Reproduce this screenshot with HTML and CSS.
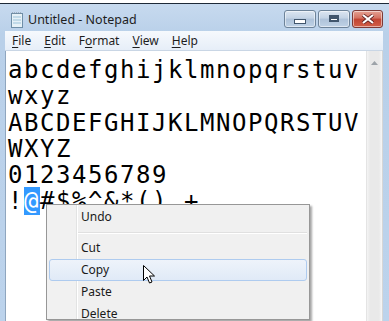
FILE: index.html
```html
<!DOCTYPE html>
<html lang="en">

<head>
    <meta charset="UTF-8">
    <title>Untitled - Notepad</title>
    <link rel="stylesheet" href="styles.css">
</head>

<body>
    <div class="window">
        <div class="titlebar">
            <svg class="app-icon" width="12" height="16" viewBox="0 0 12 16">
                <rect x="0.5" y="1.5" width="11" height="14" fill="#e6f1f7" stroke="#6f8fa8" />
                <line x1="2" y1="5" x2="10" y2="5" stroke="#9cc3da" />
                <line x1="2" y1="8" x2="10" y2="8" stroke="#9cc3da" />
                <line x1="2" y1="11" x2="10" y2="11" stroke="#9cc3da" />
                <line x1="1" y1="1" x2="11" y2="1" stroke="#7a8a98" stroke-dasharray="1 1" />
            </svg>
            <span class="title">Untitled - Notepad</span>
            <div class="buttons">
                <div class="btn">
                    <span class="glyph-min"></span>
                </div>
                <div class="btn">
                    <span class="glyph-max"></span>
                </div>
                <div class="btn close">
                    <svg width="14" height="10" viewBox="0 0 14 10">
                        <path d="M2 1 L12 9 M12 1 L2 9" stroke="#5a1f1f" stroke-width="3.6" />
                        <path d="M2 1 L12 9 M12 1 L2 9" stroke="#ffffff" stroke-width="2.2" />
                    </svg>
                </div>
            </div>
        </div>

        <div class="client">
            <div class="menubar">
                <span class="menu"><u>F</u>ile</span>
                <span class="menu"><u>E</u>dit</span>
                <span class="menu">F<u>o</u>rmat</span>
                <span class="menu"><u>V</u>iew</span>
                <span class="menu"><u>H</u>elp</span>
            </div>
            <div class="editor">
                <div class="text">abcdefghijklmnopqrstuv
wxyz
ABCDEFGHIJKLMNOPQRSTUV
WXYZ
0123456789
!<span class="sel">@</span>#$%^&amp;*()_+</div>
                <div class="scrollbar">
                    <svg class="up" width="7" height="4" viewBox="0 0 7 4">
                        <path d="M0 4 L3.5 0 L7 4 Z" fill="#9da3a9" />
                    </svg>
                </div>
            </div>
        </div>
    </div>

    <div class="context">
        <div class="item">Undo</div>
        <div class="sep"></div>
        <div class="item">Cut</div>
        <div class="item hot">Copy</div>
        <div class="item">Paste</div>
        <div class="item">Delete</div>
    </div>

    <svg class="pointer" width="13" height="20" viewBox="0 0 13 20">
        <path d="M0.5 0.5 L0.5 15.5 L4 12 L6.5 18 L9 17 L6.5 11 L11.5 11 Z" fill="#ffffff" stroke="#000000" stroke-width="1" stroke-linejoin="miter" />
    </svg>
</body>

</html>
```

FILE: styles.css
```css
html {
    overflow: hidden;
}

body {
    margin: 0;
    width: 389px;
    height: 321px;
    overflow: hidden;
    background: #ffffff;
    padding-top: 3px;
    box-sizing: border-box;
    position: relative;
}

.window {
    height: 318px;
    border-top: 1px solid #1d2a38;
    background: linear-gradient(to bottom, #c7daef, #b9d0e9 30px, #bcd3ec);
    padding: 0 6px 0 5px;
    box-sizing: border-box;
    display: flex;
    flex-direction: column;
}

.titlebar {
    height: 27px;
    display: flex;
    align-items: center;
    flex-shrink: 0;
}

.app-icon {
    margin-left: 6px;
    margin-top: 4px;
}

.title {
    font-family: "Noto Sans", "Open Sans", sans-serif;
    font-size: 12.5px;
    color: #1e1e1e;
    margin-left: 5px;
    margin-top: 4px;
}

.buttons {
    margin-left: auto;
    display: flex;
    gap: 2px;
    margin-top: 2px;
}

.btn {
    width: 30px;
    height: 16px;
    border: 1px solid #6d8399;
    border-radius: 3px;
    background: linear-gradient(to bottom, #dce6f1, #c3d3e5 45%, #aec2d9 50%, #bfd2e6);
    box-shadow: inset 0 0 0 1px rgba(255, 255, 255, 0.5);
    display: flex;
    align-items: center;
    justify-content: center;
}

.btn.close {
    width: 29px;
    border-color: #7d3a36;
    background: linear-gradient(to bottom, #e5a293, #d4705f 45%, #c14432 50%, #d15f48);
}

.glyph-min {
    width: 10px;
    height: 3px;
    margin-top: 5px;
    background: #ffffff;
    border: 1px solid #41566d;
}

.glyph-max {
    width: 8px;
    height: 5px;
    background: #ffffff;
    border: 1px solid #41566d;
    box-shadow: inset 0 0 0 1px #41566d, inset 0 2px 0 1px #41566d;
}

.client {
    flex: 1;
    display: flex;
    flex-direction: column;
    min-height: 0;
}

.menubar {
    height: 19px;
    background: linear-gradient(to bottom, #f6f9fd, #e6eef8);
    border-bottom: 1px solid #c9d6e5;
    display: flex;
    align-items: center;
    font-family: "Noto Sans", "Open Sans", sans-serif;
    font-size: 12px;
    color: #1e1e1e;
    padding-left: 7px;
    gap: 13px;
    flex-shrink: 0;
}

.menu u {
    text-decoration-thickness: 1px;
    text-underline-offset: 2px;
}

.editor {
    flex: 1;
    display: flex;
    background: #ffffff;
    border-left: 1px solid #8fa6bf;
    min-height: 0;
}

.text {
    flex: 1;
    white-space: pre;
    font-family: "DejaVu Sans Mono", "Liberation Mono", monospace;
    font-size: 24px;
    letter-spacing: 1.55px;
    line-height: 26.3px;
    color: #000000;
    padding: 6px 0 0 2px;
    overflow: hidden;
}

.sel {
    background: #3399ff;
    color: #ffffff;
}

.scrollbar {
    width: 15px;
    background: linear-gradient(to right, #f4f4f4, #e9e9e9 20%, #e9e9e9 80%, #f6f6f6);
    border-left: 1px solid #e4e4e4;
    border-right: 1px solid #d6d6d6;
    display: flex;
    justify-content: center;
    padding-top: 10px;
    box-sizing: content-box;
}

.up {
    display: block;
}

/* context menu floats over the text */
.context {
    position: absolute;
    left: 46px;
    top: 204px;
    width: 258px;
    height: 112px;
    border: 1px solid #979797;
    background: linear-gradient(to right, #f1f1f1 29px, #e2e3e3 29px, #e2e3e3 30px, #ffffff 30px, #ffffff 31px, #f0f0f0 31px);
    box-shadow: 2px 2px 2px rgba(0, 0, 0, 0.35);
    padding: 1px 2px;
    font-family: "Noto Sans", "Open Sans", sans-serif;
    font-size: 12px;
    color: #1a1a1a;
}

.item {
    height: 22px;
    line-height: 22px;
    padding-left: 32px;
    box-sizing: border-box;
}

.sep {
    height: 9px;
    margin-left: 29px;
    background: linear-gradient(to bottom, transparent 4px, #e0e0e0 4px, #e0e0e0 5px, #ffffff 5px, #ffffff 6px, transparent 6px);
}

.item.hot {
    border: 1px solid #aecbef;
    border-radius: 3px;
    background: linear-gradient(to bottom, #eef3fa, #e0eaf7);
    line-height: 20px;
    padding-left: 31px;
}

.pointer {
    position: absolute;
    left: 143px;
    top: 265px;
}
```
